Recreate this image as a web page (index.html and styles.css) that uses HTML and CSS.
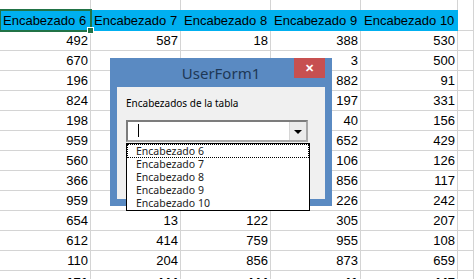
FILE: index.html
```html
<!DOCTYPE html>
<html lang="es">
<head>
  <meta charset="UTF-8" />
  <title>UserForm1</title>
  <link rel="stylesheet" href="styles.css">
</head>
<body>

  <div class="sheet">
    <div class="cell top"></div><div class="cell top"></div><div class="cell top"></div><div class="cell top"></div><div class="cell top"></div><div class="cell top"></div>

    <div class="cell head selected">Encabezado 6<span class="handle"></span></div>
    <div class="cell head">Encabezado 7</div>
    <div class="cell head">Encabezado 8</div>
    <div class="cell head">Encabezado 9</div>
    <div class="cell head">Encabezado 10</div>
    <div class="cell head blank"></div>

    <div class="cell">492</div><div class="cell">587</div><div class="cell">18</div><div class="cell">388</div><div class="cell">530</div><div class="cell"></div>
    <div class="cell">670</div><div class="cell"></div><div class="cell"></div><div class="cell">3</div><div class="cell">500</div><div class="cell"></div>
    <div class="cell">196</div><div class="cell"></div><div class="cell"></div><div class="cell">882</div><div class="cell">91</div><div class="cell"></div>
    <div class="cell">824</div><div class="cell"></div><div class="cell"></div><div class="cell">197</div><div class="cell">331</div><div class="cell"></div>
    <div class="cell">198</div><div class="cell"></div><div class="cell"></div><div class="cell">40</div><div class="cell">156</div><div class="cell"></div>
    <div class="cell">959</div><div class="cell"></div><div class="cell"></div><div class="cell">652</div><div class="cell">429</div><div class="cell"></div>
    <div class="cell">560</div><div class="cell"></div><div class="cell"></div><div class="cell">106</div><div class="cell">126</div><div class="cell"></div>
    <div class="cell">366</div><div class="cell"></div><div class="cell"></div><div class="cell">856</div><div class="cell">117</div><div class="cell"></div>
    <div class="cell">959</div><div class="cell"></div><div class="cell"></div><div class="cell">226</div><div class="cell">242</div><div class="cell"></div>
    <div class="cell">654</div><div class="cell">13</div><div class="cell">122</div><div class="cell">305</div><div class="cell">207</div><div class="cell"></div>
    <div class="cell">612</div><div class="cell">414</div><div class="cell">759</div><div class="cell">955</div><div class="cell">108</div><div class="cell"></div>
    <div class="cell">110</div><div class="cell">204</div><div class="cell">856</div><div class="cell">873</div><div class="cell">659</div><div class="cell"></div>
    <div class="cell total">171</div><div class="cell total">444</div><div class="cell total">444</div><div class="cell total">41</div><div class="cell total">447</div><div class="cell"></div>
  </div>

  <div class="userform">
    <div class="titlebar">
      UserForm1
      <span class="close">&#x2715;</span>
    </div>
    <div class="client">
      <div class="caption">Encabezados de la tabla</div>
      <div class="combo">
        <span class="caret"></span>
        <span class="drop"><span class="arrow"></span></span>
      </div>
      <ul class="list">
        <li class="focus">Encabezado 6</li>
        <li>Encabezado 7</li>
        <li>Encabezado 8</li>
        <li>Encabezado 9</li>
        <li>Encabezado 10</li>
      </ul>
    </div>
  </div>

</body>
</html>
```

FILE: styles.css
```css
body {
  margin: 0;
  background: #fff;
  overflow: hidden;
  font-family: 'Liberation Sans', Arial, sans-serif;
}

.sheet {
  display: grid;
  grid-template-columns: 91px 90px 90px 90px 97px 1fr;
  grid-template-rows: 10px 21px;
  grid-auto-rows: 20px;
  font-size: 13px;
  color: #000;
}

.cell {
  box-sizing: border-box;
  border-right: 1px solid #d4d4d4;
  border-bottom: 1px solid #d4d4d4;
  text-align: right;
  padding-right: 2px;
  line-height: 19px;
  white-space: nowrap;
  overflow: hidden;
}

.cell.top {
  border-bottom: none;
}

.cell.head {
  background: #00b0f0;
  border: none;
  text-align: left;
  padding-left: 3px;
  line-height: 21px;
  overflow: visible;
}

.cell.head.blank {
  background: #fff;
  border-right: 1px solid #d4d4d4;
  border-bottom: 1px solid #d4d4d4;
}

.cell.selected {
  position: relative;
  outline: 2px solid #217346;
  outline-offset: -1px;
  z-index: 1;
}

.handle {
  position: absolute;
  right: -3px;
  bottom: -3px;
  width: 5px;
  height: 5px;
  background: #217346;
  border: 1px solid #fff;
}

.cell.total {
  font-weight: bold;
  padding-top: 2px;
}

/* userform window */
.userform {
  position: absolute;
  left: 110px;
  top: 58px;
  width: 222px;
  height: 148px;
  box-sizing: border-box;
  background: #5a8ac2;
  padding: 0 7px 7px;
  display: flex;
  flex-direction: column;
  z-index: 2;
}

.titlebar {
  position: relative;
  height: 29px;
  line-height: 30px;
  text-align: center;
  font-family: 'Noto Sans', sans-serif;
  font-size: 15px;
  color: #1e3856;
}

.close {
  position: absolute;
  top: 0;
  right: 0;
  width: 31px;
  height: 20px;
  line-height: 20px;
  background: #c75050;
  color: #fff;
  font-size: 11px;
  font-weight: bold;
}

.client {
  position: relative;
  flex: 1;
  background: #f0f0f0;
  padding: 9px 0 0 9px;
  font-family: 'Noto Sans', sans-serif;
  font-size: 10px;
  color: #000;
}

.caption {
  line-height: 14px;
}

.combo {
  position: relative;
  margin-top: 10px;
  width: 182px;
  height: 22px;
  box-sizing: border-box;
  background: #fff;
  border: 2px solid #a8a8a8;
  border-top-color: #7c7c7c;
  border-left-color: #7c7c7c;
}

.caret {
  position: absolute;
  left: 10px;
  top: 2px;
  width: 1px;
  height: 13px;
  background: #000;
}

.drop {
  position: absolute;
  right: 0;
  top: 0;
  width: 16px;
  height: 18px;
  background: #ececec;
  border-left: 1px solid #d6d6d6;
}

.arrow {
  position: absolute;
  left: 4px;
  top: 8px;
  border-left: 4px solid transparent;
  border-right: 4px solid transparent;
  border-top: 4px solid #000;
}

.list {
  position: absolute;
  left: 9px;
  top: 56px;
  width: 184px;
  height: 68px;
  box-sizing: border-box;
  margin: 0;
  padding: 0;
  list-style: none;
  background: #fff;
  border: 1px solid #000;
  font-size: 10.5px;
  color: #222;
}

.list li {
  height: 13px;
  line-height: 13px;
  padding-left: 9px;
  box-sizing: border-box;
}

.list li.focus {
  height: 14px;
  border: 1px dotted #000;
  padding-left: 8px;
  line-height: 12px;
}
```
